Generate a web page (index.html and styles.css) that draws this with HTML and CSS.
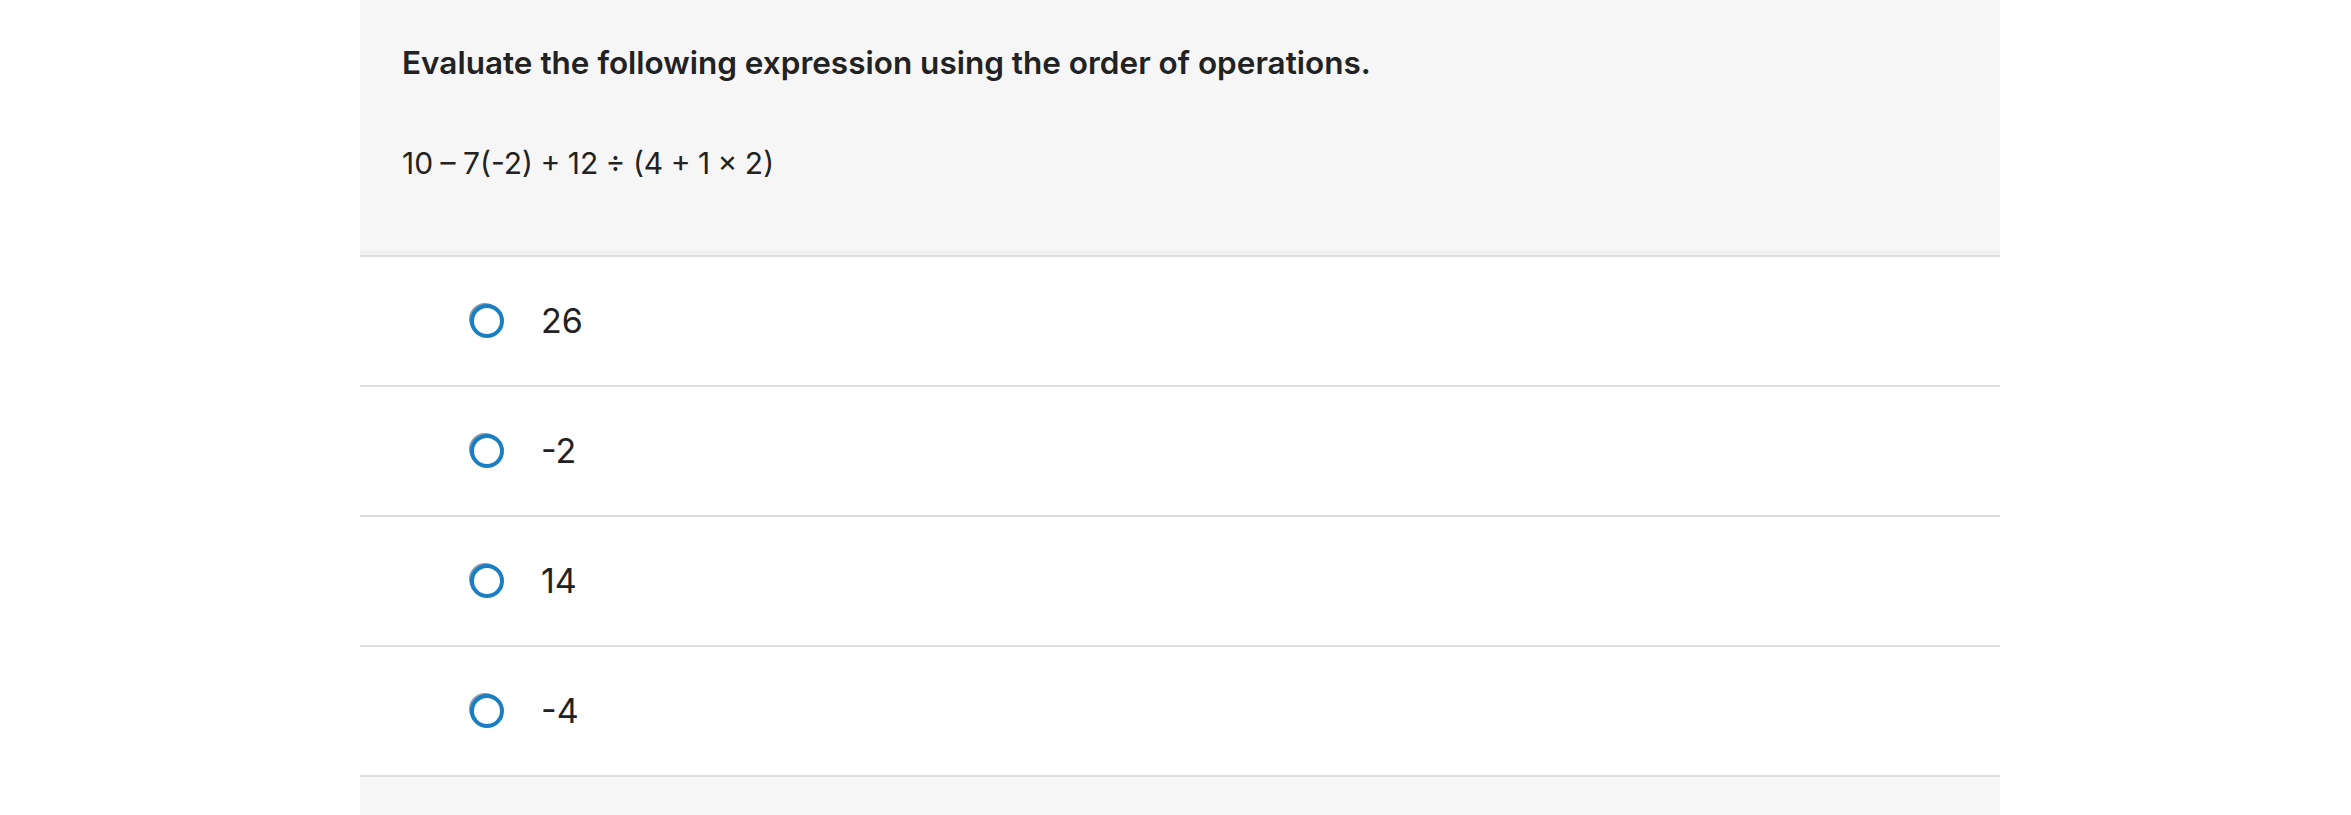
FILE: index.html
```html
<!DOCTYPE html>
<html>
<head>
<meta charset="utf-8">
<link rel="stylesheet" href="styles.css">
</head>
<body>
<div class="page">
  <div class="question">
    <div class="prompt">Evaluate the following expression using the order of operations.</div>
    <div class="expr">10 – 7(-2) + 12 ÷ (4 + 1 × 2)</div>
  </div>
  <div class="options">
    <label class="option"><span class="radio"></span><span class="answer">26</span></label>
    <label class="option"><span class="radio"></span><span class="answer">-2</span></label>
    <label class="option"><span class="radio"></span><span class="answer">14</span></label>
    <label class="option"><span class="radio"></span><span class="answer">-4</span></label>
  </div>
  <div class="footer"></div>
</div>
</body>
</html>
```
FILE: styles.css
```css
html, body {
  margin: 0;
  padding: 0;
  background: #ffffff;
}
body {
  font-family: "Inter", "Lato", "Liberation Sans", sans-serif;
  color: #222222;
}
.page {
  width: 1640px;
  margin-left: 360px;
  height: 815px;
  display: flex;
  flex-direction: column;
}
.question {
  background: #f6f6f6;
  padding: 42px 42px 0 42px;
  height: 213px;
  border-bottom: 2px solid #dedede;
  box-shadow: inset 0 -4px 0 #f0f0f0;
}
.prompt {
  font-size: 31.5px;
  line-height: 42px;
  font-weight: 600;
}
.expr {
  margin-top: 59px;
  font-size: 30px;
  line-height: 40px;
  font-weight: 400;
  word-spacing: -1px;
}
.options {
  display: flex;
  flex-direction: column;
}
.option {
  display: flex;
  align-items: center;
  height: 128px;
  padding-left: 110px;
  border-bottom: 2px solid #dedede;
}
.radio {
  position: relative;
  width: 34px;
  height: 34px;
  box-sizing: border-box;
  border: 4px solid #1a7fc2;
  border-radius: 50%;
  background: #fff;
  box-shadow: -2px -2px 0 -1px #8a9aa8;
}
.answer {
  margin-left: 37px;
  font-size: 34px;
  line-height: 40px;
}
.footer {
  flex: 1;
  background: #f6f6f6;
}
```
